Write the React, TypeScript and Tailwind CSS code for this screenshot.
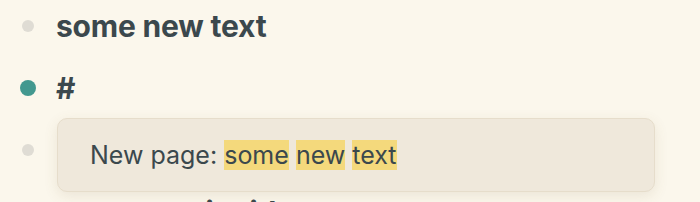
import React from 'react';

// outline blocks shown behind the page-search popup
const blocks = [
  { key: 'title', text: 'some new text', bullet: 'muted' },
  { key: 'hash', text: '#', bullet: 'active' },
  { key: 'empty', text: '', bullet: 'muted' },
  { key: 'next', text: 'some text in title', bullet: 'muted' },
];

const Bullet: React.FC<{ active?: boolean }> = ({ active }) => (
  <div className="flex w-4 justify-center">
    {active ? (
      <span className="h-4 w-4 rounded-full bg-[#42988f]" />
    ) : (
      <span className="h-3 w-3 rounded-full bg-[#dfdcd4]" />
    )}
  </div>
);

const Highlight: React.FC<{ children: React.ReactNode }> = ({ children }) => (
  <span className="bg-[#f4d97c]">{children}</span>
);

export default function App() {
  return (
    <div
      className="relative h-[202px] w-[700px] overflow-hidden bg-[#fbf7ec] text-[#3b484d]"
      style={{ fontFamily: 'Inter, "Noto Sans", sans-serif' }}
    >
      <div className="-mt-[5px] flex flex-col pl-5">
        {blocks.map(block => (
          <div key={block.key} className="flex h-[62px] items-center gap-5">
            <Bullet active={block.bullet === 'active'} />
            <div className="text-[30px] leading-none font-bold tracking-[-0.2px]">{block.text}</div>
          </div>
        ))}
      </div>

      <div className="absolute top-[118px] left-[57px] flex h-[74px] w-[598px] items-center rounded-[10px] border border-[#e6ddcb] bg-[#efe8db] pl-8 shadow-[0_4px_14px_rgba(120,100,60,0.12)]">
        <p className="text-[25px] leading-[30px] whitespace-pre">
          New page: <Highlight>some</Highlight> <Highlight>new</Highlight> <Highlight>text</Highlight>
        </p>
      </div>
    </div>
  );
}
